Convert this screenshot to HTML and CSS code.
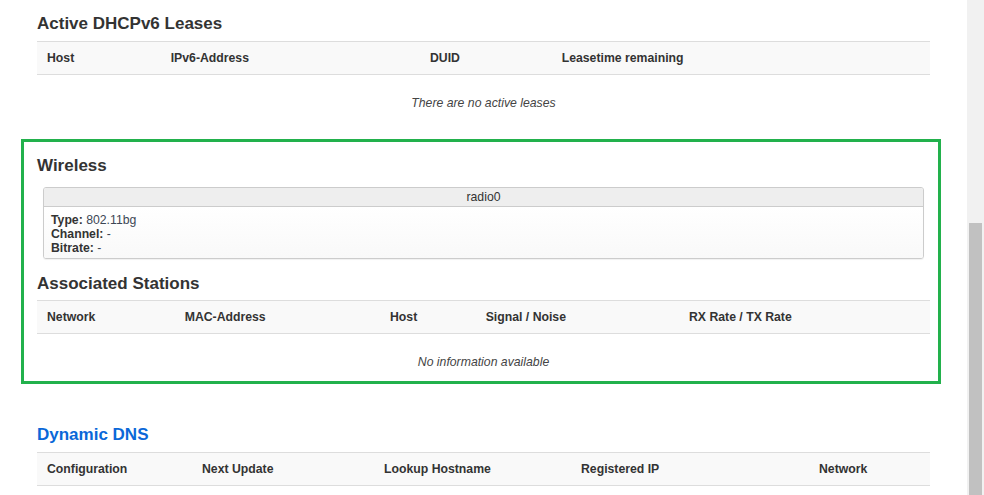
FILE: index.html
```html
<!DOCTYPE html>
<html>
<head>
<meta charset="utf-8">
<title>Status</title>
<link rel="stylesheet" href="styles.css">
</head>
<body>
<div class="page">
  <section class="block first">
    <h3 class="title">Active DHCPv6 Leases</h3>
    <table class="grid">
      <colgroup><col class="c1a"><col class="c1b"><col class="c1c"><col></colgroup>
      <thead><tr><th>Host</th><th>IPv6-Address</th><th>DUID</th><th>Leasetime remaining</th></tr></thead>
      <tbody><tr><td class="empty" colspan="4">There are no active leases</td></tr></tbody>
    </table>
  </section>

  <section class="block wireless">
    <h3 class="title">Wireless</h3>
    <div class="radio">
      <div class="radio-head">radio0</div>
      <div class="radio-body">
        <div><b>Type:</b> <span class="val">802.11bg</span></div>
        <div><b>Channel:</b> <span class="val">-</span></div>
        <div><b>Bitrate:</b> <span class="val">-</span></div>
      </div>
    </div>
    <h3 class="title sub">Associated Stations</h3>
    <table class="grid grid2">
      <colgroup><col class="c2a"><col class="c2b"><col class="c2c"><col class="c2d"><col></colgroup>
      <thead><tr><th>Network</th><th>MAC-Address</th><th>Host</th><th>Signal / Noise</th><th>RX Rate / TX Rate</th></tr></thead>
      <tbody><tr><td class="empty" colspan="5">No information available</td></tr></tbody>
    </table>
  </section>

  <section class="block ddns">
    <h3 class="title link">Dynamic DNS</h3>
    <table class="grid">
      <colgroup><col class="c3a"><col class="c3b"><col class="c3c"><col class="c3d"><col></colgroup>
      <thead><tr><th>Configuration</th><th>Next Update</th><th>Lookup Hostname</th><th>Registered IP</th><th>Network</th></tr></thead>
    </table>
  </section>
</div>
<div class="scrollbar"><div class="thumb"></div></div>
</body>
</html>
```

FILE: styles.css
```css
html, body {
  margin: 0;
  padding: 0;
  height: 100%;
}
body {
  display: flex;
  overflow: hidden;
  background: #ffffff;
  font-family: "Liberation Sans", Arial, sans-serif;
  font-size: 12.25px;
  color: #333333;
}
.page {
  flex: 1;
  padding: 11px 37px 0 37px;
  min-width: 0;
}
.scrollbar {
  width: 17px;
  flex: none;
  background: #f1f1f1;
  display: flex;
  flex-direction: column;
}
.thumb {
  margin: 223px 2px 0 2px;
  flex: 1;
  background: #c1c1c1;
}
.title {
  margin: 0 0 5px 0;
  font-size: 17px;
  line-height: 25px;
  font-weight: bold;
  color: #333333;
}
.title.sub {
  margin: 12px 0 4px 0;
}
.title.link {
  color: #0a68d8;
}
.block.wireless {
  margin-top: 26px;
  position: relative;
}
.block.wireless::before {
  content: "";
  position: absolute;
  top: -14px;
  bottom: 2px;
  left: -16px;
  right: -11px;
  border: 3px solid #22b14c;
  pointer-events: none;
}
.block.ddns {
  margin-top: 36px;
}
.grid {
  width: 100%;
  border-collapse: collapse;
  table-layout: fixed;
}
.grid th {
  text-align: left;
  font-weight: bold;
  background: #f9f9f9;
  border-top: 1px solid #dddddd;
  border-bottom: 1px solid #dddddd;
  padding: 0 10px;
  height: 32px;
  line-height: 16px;
  color: #333333;
  white-space: nowrap;
}
.grid td.empty {
  text-align: center;
  font-style: italic;
  color: #444444;
  padding: 20px 10px 16px 10px;
  line-height: 16px;
}
.c1a { width: 123.7px; }
.c1b { width: 259.3px; }
.c1c { width: 131.7px; }
.c2a { width: 137.7px; }
.c2b { width: 205.3px; }
.c2c { width: 95.7px; }
.c2d { width: 203.3px; }
.c3a { width: 155px; }
.c3b { width: 182px; }
.c3c { width: 197px; }
.c3d { width: 238px; }
.radio {
  margin: 9px 6px 0 6px;
  border: 1px solid #cccccc;
  border-radius: 3px;
  box-shadow: 0 1px 1px rgba(0, 0, 0, 0.06);
  overflow: hidden;
}
.radio-head {
  background: #eeeeee;
  border-bottom: 1px solid #cccccc;
  text-align: center;
  height: 18px;
  line-height: 19px;
  color: #333333;
}
.radio-body {
  padding: 6px 7px 3px 7px;
  line-height: 14px;
  background: linear-gradient(#ffffff, #f9f9f9);
}
.radio-body b {
  font-weight: bold;
}
.val {
  color: #3c4654;
}
```
